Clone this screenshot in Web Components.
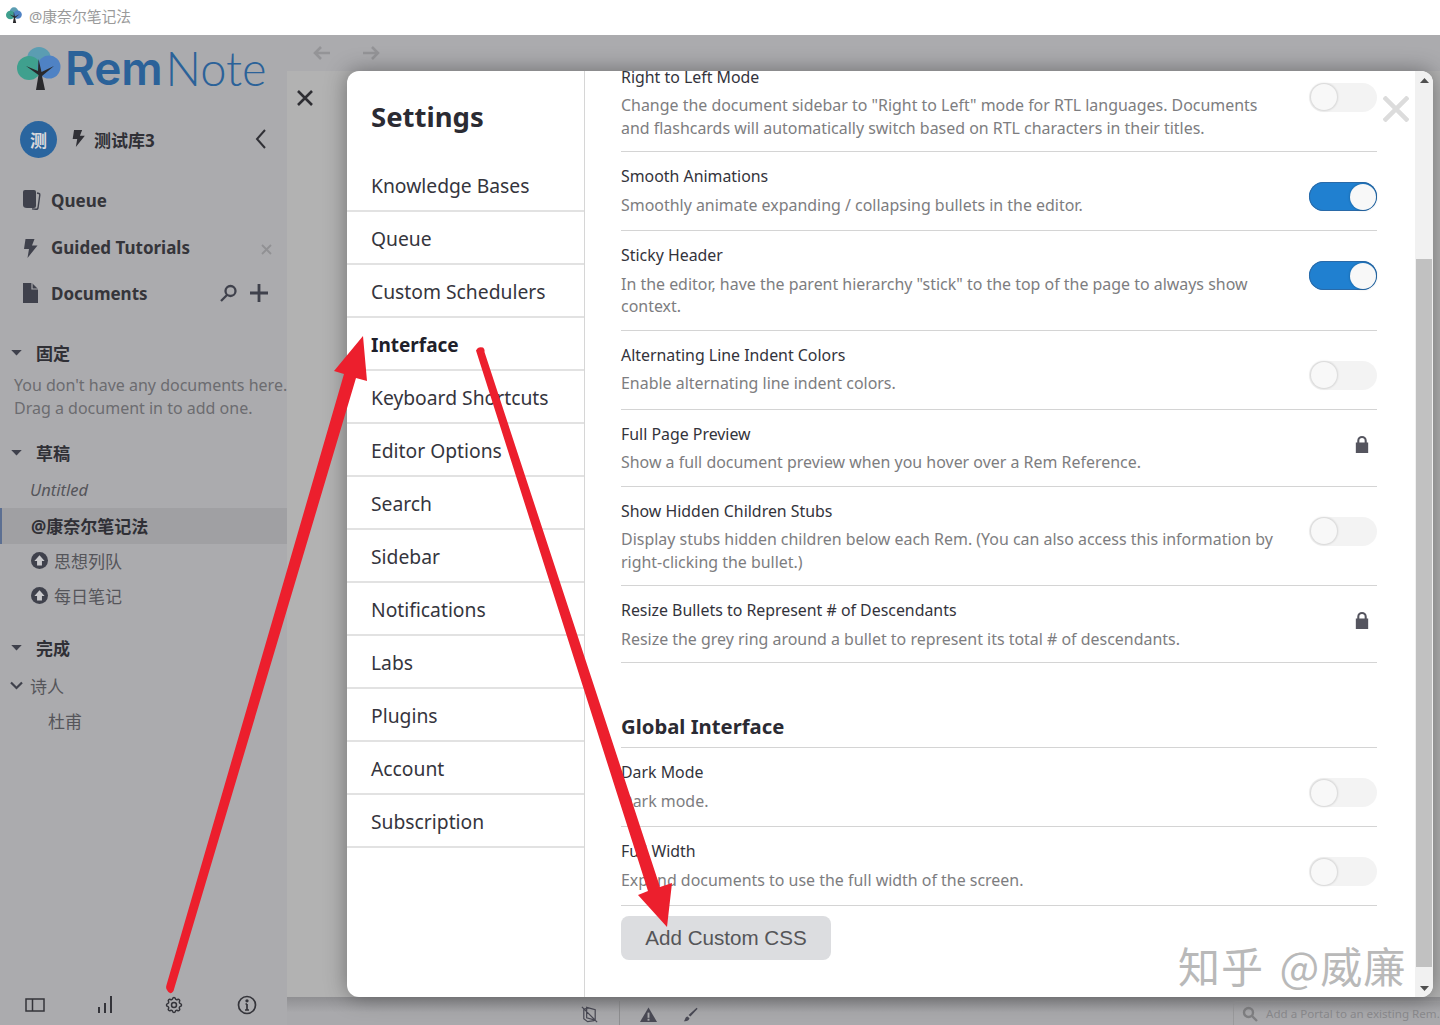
<!DOCTYPE html>
<html>
<head>
<meta charset="utf-8">
<title>RemNote settings</title>
<style>
  html, body { margin: 0; height: 100%; overflow: hidden; }
  body { width: 1440px; height: 1025px; display: flex; flex-direction: column; font-family: "Noto Sans", "Noto Sans CJK SC", sans-serif; position: relative; }
</style>
</head>
<body>
<tab-strip>@康奈尔笔记法</tab-strip>
<app-shell>
  <side-bar slot="side"></side-bar>
  <settings-modal slot="modal">
    <settings-nav slot="nav"></settings-nav>
    <setting-row toggle="off" title-text="Right to Left Mode">Change the document sidebar to "Right to Left" mode for RTL languages. Documents and flashcards will automatically switch based on RTL characters in their titles.</setting-row>
    <setting-row toggle="on" title-text="Smooth Animations">Smoothly animate expanding / collapsing bullets in the editor.</setting-row>
    <setting-row toggle="on" title-text="Sticky Header">In the editor, have the parent hierarchy "stick" to the top of the page to always show context.</setting-row>
    <setting-row toggle="off" title-text="Alternating Line Indent Colors">Enable alternating line indent colors.</setting-row>
    <setting-row locked title-text="Full Page Preview">Show a full document preview when you hover over a Rem Reference.</setting-row>
    <setting-row toggle="off" title-text="Show Hidden Children Stubs">Display stubs hidden children below each Rem. (You can also access this information by right-clicking the bullet.)</setting-row>
    <setting-row locked title-text="Resize Bullets to Represent # of Descendants">Resize the grey ring around a bullet to represent its total # of descendants.</setting-row>
    <section-heading>Global Interface</section-heading>
    <setting-row toggle="off" title-text="Dark Mode">Dark mode.</setting-row>
    <setting-row toggle="off" title-text="Full Width">Expand documents to use the full width of the screen.</setting-row>
    <css-button>Add Custom CSS</css-button>
  </settings-modal>
</app-shell>
<photo-marks></photo-marks>

<script>
const TREE = `
  <circle cx="22" cy="13" r="12" fill="#5b9db2"/>
  <circle cx="12" cy="22" r="12" fill="#3fa08e"/>
  <circle cx="32" cy="21" r="11.500" fill="#4f82c4"/>
  <path d="M19 44 L21.500 29 L9 20 L21 25 L21.500 13 L24.500 26 L37 20 L25 30 L28 44 Z" fill="#29292c"/>`;

class TabStrip extends HTMLElement {
  connectedCallback() {
    const root = this.attachShadow({ mode: "open" });
    root.innerHTML = `
      <style>
        :host { display: flex; align-items: center; height: 35px; box-sizing: border-box; padding: 0 0 5px 6px; flex: none; background: #fff; color: #9a9a9a; font-size: 14.800px; gap: 7px; }
        svg { width: 16px; height: 16px; }
      </style>
      <svg viewBox="0 0 44 44">${TREE}</svg>
      <slot></slot>`;
  }
}

class AppShell extends HTMLElement {
  connectedCallback() {
    const root = this.attachShadow({ mode: "open" });
    root.innerHTML = `
      <style>
        :host { display: flex; flex: 1; min-height: 0; background: #ababae; }
        .main { flex: 1; display: flex; flex-direction: column; min-width: 0; }
        .tools { height: 36px; flex: none; display: flex; align-items: center; gap: 29px; padding: 0 0 0 25px; color: #949497; }
        .tools svg { width: 20px; height: 20px; }
        .stage { flex: 1; display: flex; min-height: 0; background: #b2b2b2; padding-right: 7px; }
        .close { width: 60px; flex: none; color: #2e2e33; padding: 18px 0 0 9px; box-sizing: border-box; }
        .close svg { width: 18px; height: 18px; display: block; }
        .bottom { height: 28px; flex: none; display: flex; align-items: flex-end; background: linear-gradient(#8f8f92, #a9a9ac 55%); }
        .bicons { margin-left: 293px; width: 653px; height: 28px; display: flex; align-items: center; color: #4a4a55; padding-top: 6px; box-sizing: border-box; }
        .bicons svg { width: 19px; height: 19px; flex: none; }
        .sep { width: 1px; height: 26px; background: #8e8e90; margin: 0 19px 0 20px; }
        .portal { width: 207px; height: 24px; box-sizing: border-box; border: 1px solid #9a9a9c; border-bottom: 0; border-right: 0; border-radius: 4px 0 0 0; display: flex; align-items: center; gap: 8px; padding-left: 8px; font-size: 11.600px; color: #8a8a8d; white-space: nowrap; }
        .portal svg { width: 16px; height: 16px; flex: none; color: #808083; }
      </style>
      <slot name="side"></slot>
      <div class="main">
        <div class="tools">
          <svg viewBox="0 0 20 20" fill="none" stroke="currentColor" stroke-width="2.600"><path d="M18 10H3M9 4l-6 6 6 6"/></svg>
          <svg viewBox="0 0 20 20" fill="none" stroke="currentColor" stroke-width="2.600"><path d="M2 10h15M11 4l6 6-6 6"/></svg>
        </div>
        <div class="stage">
          <div class="close"><svg viewBox="0 0 18 18" fill="none" stroke="currentColor" stroke-width="2.600"><path d="M2 2l14 14M16 2L2 16"/></svg></div>
          <slot name="modal"></slot>
        </div>
        <div class="bottom">
          <div class="bicons">
            <svg viewBox="0 0 20 20" fill="none" stroke="currentColor" stroke-width="1.300"><path d="M7 2.500l9 2.500v11l-9-2.500zM4 4.500l5-1.500M4 4.500v10l4 3 7-1M2 2l16 16"/></svg>
            <div class="sep"></div>
            <svg viewBox="0 0 20 20" fill="currentColor"><path d="M10 2.500L19 18H1z"/><rect x="9" y="8" width="2" height="5.500" fill="#a9a9ac"/><rect x="9" y="14.500" width="2" height="2" fill="#a9a9ac"/></svg>
            <svg style="margin-left:22px" viewBox="0 0 20 20" fill="currentColor"><path d="M17.500 3l1 1-7.500 8-2-1.500zM8 12l2 2c-.5 2.500-3 3.500-6 3 1.500-1 1-4.500 4-5z"/></svg>
          </div>
          <div class="portal">
            <svg viewBox="0 0 16 16" fill="none" stroke="currentColor" stroke-width="2.400"><circle cx="6.500" cy="6.500" r="4.500"/><path d="M10 10l5 5"/></svg>
            <span>Add a Portal to an existing Rem.</span>
          </div>
        </div>
      </div>`;
  }
}

class SideBar extends HTMLElement {
  connectedCallback() {
    const root = this.attachShadow({ mode: "open" });
    const caret = `<svg class="caret" viewBox="0 0 12 8" fill="currentColor"><path d="M0 1h12L6 7.500z"/></svg>`;
    const up = `<svg class="up" viewBox="0 0 16 16"><circle cx="8" cy="8" r="8" fill="#3f414c"/><path d="M8 3L12.800 8.500H10.300v4.300H5.700V8.500H3.200z" fill="#c9c9cc"/></svg>`;
    const bolt = `<path d="M4.500 1h9L11 7.500h5.500L6.500 20 8 11H3z" fill="currentColor"/>`;
    root.innerHTML = `
      <style>
        :host { display: flex; flex-direction: column; width: 287px; flex: none; background: #ababae; color: #303036; font-size: 17px; }
        .logo { display: flex; align-items: center; height: 64px; padding: 1px 0 0 17px; box-sizing: border-box; color: #2b6299; }
        .logo svg { width: 44px; height: 44px; margin-right: 4px; flex: none; }
        .logo b { font-family: Inter, sans-serif; font-weight: 600; font-size: 46px; line-height: 50px; letter-spacing: -.2px; }
        .logo span { font-family: Lato, sans-serif; font-weight: 300; font-size: 47px; line-height: 50px; margin-left: 3px; }
        .kb { display: flex; align-items: center; height: 38px; margin-top: 21px; padding-left: 20px; font-weight: 700; font-size: 17px; }
        .avatar { width: 37px; height: 37px; border-radius: 50%; background: #2a659f; color: #d9d9dc; display: flex; align-items: center; justify-content: center; font-size: 17px; font-weight: 700; flex: none; }
        .kb svg.bolt { width: 18px; height: 20px; margin: 0 6px 2px 13px; }
        .kb .back { width: 12px; height: 22px; margin-left: auto; margin-right: 20px; }
        .nav { display: flex; align-items: center; box-sizing: border-box; height: 46.500px; padding-left: 21px; font-weight: 700; font-size: 17px; color: #35353a; }
        .nav svg.ic { width: 20px; height: 22px; margin-right: 10px; flex: none; color: #3f414c; }
        .nav .end { margin-left: auto; display: flex; align-items: center; }
        .sec { display: flex; align-items: center; font-weight: 700; font-size: 17px; height: 24px; padding-left: 11px; }
        .caret { width: 11px; height: 7px; margin-right: 14px; color: #3f414c; }
        .empty { padding-left: 14px; line-height: 23px; color: #6c6c70; font-size: 16px; white-space: nowrap; margin-top: 9px; }
        .doc { display: flex; align-items: center; box-sizing: border-box; height: 35px; padding: 0 0 2px 31px; font-size: 17px; color: #55555a; }
        .doc.sel { background: #a0a0a3; border-left: 2px solid #5c6f92; padding: 0 0 0 29px; height: 36px; font-weight: 700; color: #303036; }
        .up { width: 17px; height: 17px; margin-right: 6px; flex: none; }
      </style>
      <div class="logo"><svg viewBox="0 0 44 44">${TREE}</svg><b>Rem</b><span>Note</span></div>
      <div class="kb">
        <div class="avatar">测</div>
        <svg class="bolt" viewBox="0 0 20 20">${bolt}</svg>测试库3
        <svg class="back" viewBox="0 0 12 22" fill="none" stroke="currentColor" stroke-width="2"><path d="M10 2L2 11l8 9"/></svg>
      </div>
      <div class="nav" style="margin-top:19px"><svg class="ic" viewBox="0 0 20 22"><path d="M2 3q0-2 2-2h9q2 0 2 2v14q0 2-2 2H6q-4 0-4-3z" fill="currentColor"/><path d="M16 4l2 .5q1 .3.800 1.500L17 19q-.3 1.500-2 1.300l-4-.4" fill="none" stroke="currentColor" stroke-width="1.400"/></svg>Queue</div>
      <div class="nav" style="padding-top:2px"><svg class="ic" viewBox="0 0 20 20">${bolt}</svg>Guided Tutorials
        <span class="end" style="margin-right:15px;padding-top:3px"><svg width="11" height="11" viewBox="0 0 11 11" fill="none" stroke="#919194" stroke-width="1.800"><path d="M1 1l9 9M10 1l-9 9"/></svg></span></div>
      <div class="nav"><svg class="ic" viewBox="0 0 20 22"><path d="M2 1h9l6 6v14H2z" fill="currentColor"/><path d="M11 1v6h6" fill="none" stroke="#ababae" stroke-width="1.200"/></svg>Documents
        <span class="end" style="margin-right:18px;color:#3f414c">
          <svg width="19" height="19" viewBox="0 0 19 19" fill="none" stroke="currentColor" stroke-width="2.300" style="margin-right:11px"><circle cx="11.500" cy="7" r="5"/><path d="M8 11l-6 6"/></svg>
          <svg width="20" height="20" viewBox="0 0 20 20" fill="none" stroke="currentColor" stroke-width="2.800"><path d="M10 1v18M1 10h18"/></svg>
        </span></div>
      <div class="sec" style="margin-top:24px">${caret}固定</div>
      <div class="empty">You don't have any documents here.<br>Drag a document in to add one.</div>
      <div class="sec" style="margin-top:21px">${caret}草稿</div>
      <div class="doc" style="padding-left:30px;font-style:italic;margin-top:9px;height:34px;font-size:16.500px">Untitled</div>
      <div class="doc sel">@康奈尔笔记法</div>
      <div class="doc">${up}思想列队</div>
      <div class="doc">${up}每日笔记</div>
      <div class="sec" style="margin-top:22px">${caret}完成</div>
      <div class="doc" style="padding-left:10px;margin-top:9px"><svg width="13" height="9" viewBox="0 0 13 9" fill="none" stroke="#3f414c" stroke-width="2.200" style="margin-right:7px"><path d="M1 1.500l5.500 5.500L12 1.500"/></svg>诗人</div>
      <div class="doc" style="padding-left:48px">杜甫</div>
      <bottom-icons></bottom-icons>`;
  }
}

class BottomIcons extends HTMLElement {
  connectedCallback() {
    const root = this.attachShadow({ mode: "open" });
    root.innerHTML = `
      <style>
        :host { display: flex; margin-top: auto; height: 30px; padding-left: 25px; align-items: flex-start; color: #34343a; }
        svg { width: 20px; height: 20px; flex: none; fill: none; stroke: currentColor; }
      </style>
      <svg viewBox="0 0 20 20" stroke-width="1.500"><rect x="1" y="4" width="18" height="12"/><path d="M7.500 4v12"/></svg>
      <svg viewBox="0 0 20 20" stroke-width="2" style="margin-left:50px"><path d="M4 18v-6M10 18V8M16 18V1"/></svg>
      <svg viewBox="0 0 24 24" stroke-width="1.800" style="margin-left:49px"><path d="M10.325 4.317c.426-1.756 2.924-1.756 3.350 0a1.724 1.724 0 002.573 1.066c1.543-.94 3.310.826 2.370 2.370a1.724 1.724 0 001.065 2.572c1.756.426 1.756 2.924 0 3.350a1.724 1.724 0 00-1.066 2.573c.94 1.543-.826 3.310-2.370 2.370a1.724 1.724 0 00-2.572 1.065c-.426 1.756-2.924 1.756-3.350 0a1.724 1.724 0 00-2.573-1.066c-1.543.94-3.310-.826-2.370-2.370a1.724 1.724 0 00-1.065-2.572c-1.756-.426-1.756-2.924 0-3.350a1.724 1.724 0 001.066-2.573c-.94-1.543.826-3.310 2.370-2.370.996.608 2.296.07 2.572-1.065z"/><circle cx="12" cy="12" r="3"/></svg>
      <svg viewBox="0 0 20 20" stroke-width="1.700" style="margin-left:53px"><circle cx="10" cy="10" r="8.500"/><path d="M10 9v6M8 15h4M8.500 9H10"/><circle cx="10" cy="5.800" r=".8" fill="currentColor"/></svg>`;
  }
}

class SettingsModal extends HTMLElement {
  connectedCallback() {
    const root = this.attachShadow({ mode: "open" });
    root.innerHTML = `
      <style>
        :host { display: flex; flex: 1; min-width: 0; background: #fff; border-radius: 12px; box-shadow: 0 0 22px rgba(0,0,0,.38); overflow: hidden; position: relative; }
        .pane { flex: 1; min-width: 0; overflow: hidden; padding: 0 38px 0 36px; }
        .list { margin-top: -18.500px; }
        .bar { width: 18px; flex: none; background: #f1f1f1; display: flex; flex-direction: column; align-items: center; }
        .arrow { height: 18px; flex: none; display: flex; align-items: center; justify-content: center; }
        .arrow svg { width: 9px; height: 5px; fill: #505050; }
        .track { flex: 1; padding-top: 170px; padding-bottom: 12px; display: flex; width: 100%; box-sizing: border-box; }
        .thumb { flex: 1; margin: 0 1px; background: #c1c1c1; }
        .x { position: absolute; right: 24px; top: 25px; width: 26px; height: 26px; fill: none; stroke: #dcdcdc; stroke-width: 4.500; }
      </style>
      <slot name="nav"></slot>
      <div class="pane"><div class="list"><slot></slot></div></div>
      <svg class="x" viewBox="0 0 26 26"><path d="M1 1l24 24M25 1L1 25"/></svg>
      <div class="bar">
        <div class="arrow"><svg viewBox="0 0 9 5"><path d="M0 5L4.500 0 9 5z"/></svg></div>
        <div class="track"><div class="thumb"></div></div>
        <div class="arrow"><svg viewBox="0 0 9 5"><path d="M0 0L4.500 5 9 0z"/></svg></div>
      </div>`;
  }
}

class SettingsNav extends HTMLElement {
  connectedCallback() {
    const root = this.attachShadow({ mode: "open" });
    const items = ["Knowledge Bases", "Queue", "Custom Schedulers", "Interface", "Keyboard Shortcuts", "Editor Options", "Search", "Sidebar", "Notifications", "Labs", "Plugins", "Account", "Subscription"];
    root.innerHTML = `
      <style>
        :host { display: block; width: 237px; flex: none; border-right: 1px solid #d6d6d6; }
        h2 { margin: 0; height: 88px; box-sizing: border-box; padding: 27px 0 0 24px; font-size: 27.500px; line-height: 38px; font-weight: 700; color: #2b2b33; }
        div { height: 53px; box-sizing: border-box; border-bottom: 2px solid #e2e2e2; padding: 13px 0 0 24px; font-size: 19.300px; line-height: 28px; color: #35353d; }
        .on { font-weight: 700; font-size: 19px; color: #20202a; }
      </style>
      <h2>Settings</h2>
      ${items.map(t => `<div class="${t === "Interface" ? "on" : ""}">${t}</div>`).join("")}`;
  }
}

class SettingRow extends HTMLElement {
  connectedCallback() {
    const root = this.attachShadow({ mode: "open" });
    const toggle = this.getAttribute("toggle");
    const locked = this.hasAttribute("locked");
    let end = "";
    if (toggle) end = `<toggle-switch class="${toggle}"></toggle-switch>`;
    if (locked) end = `<svg class="lock" viewBox="0 0 16 20" fill="#55555f"><path d="M3 8V6a5 5 0 0110 0v2h1.500v11h-13V8zm2.200 0h5.600V6a2.800 2.800 0 00-5.600 0z"/></svg>`;
    root.innerHTML = `
      <style>
        :host { display: flex; box-sizing: border-box; padding: 13px 0 12px; border-bottom: 1px solid #d4d4d4; justify-content: space-between; align-items: flex-start; ${toggle ? "min-height: 79px;" : ""} }
        .text { width: 664px; }
        .t { font-size: 15.900px; line-height: 22px; color: #33333b; }
        .d { font-size: 15.950px; line-height: 22.500px; margin-top: 6.500px; color: #7d7d80; }
        toggle-switch { margin-top: 17px; }
        .lock { width: 16px; height: 19px; margin: 12px 7px 0 0; }
      </style>
      <div class="text">
        <div class="t">${this.getAttribute("title-text")}</div>
        <div class="d"><slot></slot></div>
      </div>
      ${end}`;
  }
}

class ToggleSwitch extends HTMLElement {
  connectedCallback() {
    const root = this.attachShadow({ mode: "open" });
    root.innerHTML = `
      <style>
        :host { display: flex; width: 68px; height: 29px; border-radius: 15px; box-sizing: border-box; padding: 1.500px; background: #f3f3f3; flex: none; }
        :host(.on) { background: #2080d0; justify-content: flex-end; box-shadow: inset 0 0 0 1px #2a6aa8; }
        i { display: block; width: 26px; height: 26px; border-radius: 50%; background: #f8f8f8; box-shadow: 0 0 2px 1px rgba(0,0,0,.13); }
      </style>
      <i></i>`;
  }
}

class SectionHeading extends HTMLElement {
  connectedCallback() {
    const root = this.attachShadow({ mode: "open" });
    root.innerHTML = `
      <style>
        :host { display: block; margin-top: 48px; padding-bottom: 6px; border-bottom: 1px solid #d4d4d4; font-size: 20.300px; line-height: 30px; font-weight: 700; color: #2b2b33; }
      </style>
      <slot></slot>`;
  }
}

class CssButton extends HTMLElement {
  connectedCallback() {
    const root = this.attachShadow({ mode: "open" });
    root.innerHTML = `
      <style>
        :host { display: flex; align-items: center; justify-content: center; width: 210px; height: 44px; box-sizing: border-box; padding-bottom: 1px; margin-top: 10px; border-radius: 8px; background: #dcdde0; color: #555558; font-family: "Liberation Sans", Arial, sans-serif; font-size: 20.600px; }
      </style>
      <slot></slot>`;
  }
}

// red arrows and the watermark were drawn on top of the screenshot
class PhotoMarks extends HTMLElement {
  connectedCallback() {
    const root = this.attachShadow({ mode: "open" });
    root.innerHTML = `
      <style>
        :host { position: absolute; inset: 0; pointer-events: none; display: block; }
        svg { position: absolute; inset: 0; width: 1440px; height: 1025px; }
        .mark { position: absolute; left: 1178px; top: 936px; font-size: 42px; line-height: 58px; letter-spacing: 1px; word-spacing: 5px; color: #b9b9b9; white-space: nowrap; font-family: "Noto Sans CJK SC", sans-serif; }
      </style>
      <div class="mark">知乎 @威廉</div>
      <svg viewBox="0 0 1440 1025" fill="#ec1f2d">
        <path d="M344 374 L334 371 L363 336 L367 381 L356 378 L173.500 991 Q170 996 167 990 Q165.500 988 166.500 985 Z"/>
        <path d="M476 350.500 Q478 346 483 347.500 Q485 349 484.500 352 L660 887 L672 883 L667 927 L638 895 L648 891 Z"/>
      </svg>`;
  }
}

customElements.define("tab-strip", TabStrip);
customElements.define("app-shell", AppShell);
customElements.define("side-bar", SideBar);
customElements.define("bottom-icons", BottomIcons);
customElements.define("settings-modal", SettingsModal);
customElements.define("settings-nav", SettingsNav);
customElements.define("setting-row", SettingRow);
customElements.define("toggle-switch", ToggleSwitch);
customElements.define("section-heading", SectionHeading);
customElements.define("css-button", CssButton);
customElements.define("photo-marks", PhotoMarks);
</script>
</body>
</html>
